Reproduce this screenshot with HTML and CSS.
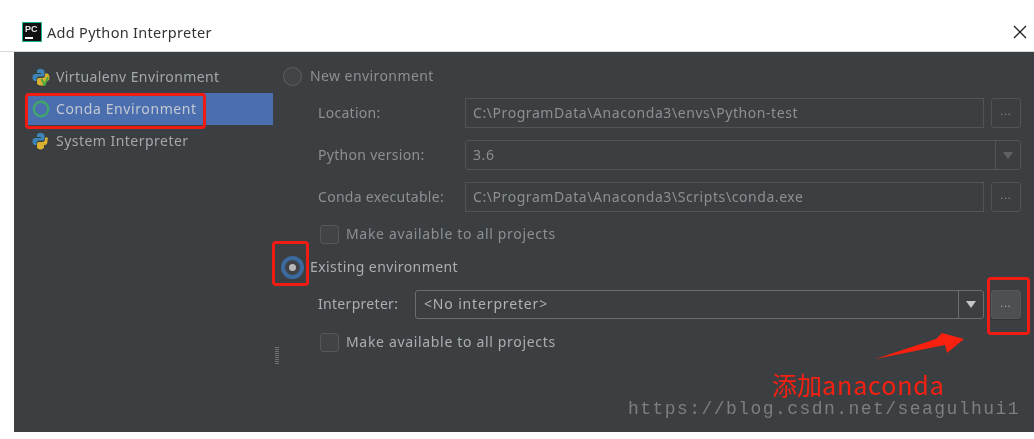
FILE: index.html
```html
<!DOCTYPE html>
<html lang="en">
<head>
<meta charset="utf-8">
<title>Add Python Interpreter</title>
<link rel="stylesheet" href="styles.css">
</head>
<body>
<div class="window">
  <header class="titlebar">
    <div class="logo"><span class="logo-text">PC</span><span class="logo-bar"></span></div>
    <span class="title">Add Python Interpreter</span>
    <svg class="close" width="16" height="16" viewBox="0 0 16 16"><path d="M2 2 L14 14 M14 2 L2 14" stroke="#222" stroke-width="1.3" fill="none"/></svg>
  </header>
  <main class="main">
    <nav class="sidebar">
      <div class="nav-item">
        <svg class="nav-icon" width="18" height="18" viewBox="0 0 18 18"><path d="M8.500 1C5.500 1 5 2.200 5 3.500V5h4v1H3C1.500 6 .5 7.200.5 9.500S1.500 13 3 13h1.500v-2c0-1.500 1.200-2.500 2.500-2.500h3.500c1.200 0 2-.8 2-2V3.500C12.500 2 11 1 8.500 1z" fill="#3d85b8"/><path d="M13 5.500v2c0 1.500-1.200 2.500-2.500 2.500H7c-1.200 0-2 .8-2 2v3c0 1.500 1.500 2.500 3.500 2.500h4.500V13h2c1.500 0 2.500-1.200 2.500-3.500S16.500 5.500 15 5.500z" fill="#d9b132"/><path d="M9.500 11 L12.500 17 L16 9" stroke="#4fa83d" stroke-width="2" fill="none"/></svg>
        <span class="nav-virtualenv">Virtualenv Environment</span>
      </div>
      <div class="nav-item nav-item-selected">
        <svg class="nav-icon" width="18" height="18" viewBox="0 0 18 18"><circle cx="9" cy="9" r="7.200" stroke="#3fa66b" stroke-width="2.400" fill="none"/></svg>
        <span>Conda Environment</span>
      </div>
      <div class="nav-item">
        <svg class="nav-icon" width="18" height="18" viewBox="0 0 18 18"><path d="M8.500 1C5.500 1 5 2.200 5 3.500V5h4v1H3C1.500 6 .5 7.200.5 9.500S1.500 13 3 13h1.500v-2c0-1.500 1.200-2.500 2.500-2.500h3.500c1.200 0 2-.8 2-2V3.500C12.500 2 11 1 8.500 1z" fill="#3d85b8"/><path d="M13 5.500v2c0 1.500-1.200 2.500-2.500 2.500H7c-1.200 0-2 .8-2 2v3c0 1.500 1.500 2.500 3.500 2.500s3.500-1 3.500-2.500V13h1c1.500 0 2.500-1.200 2.500-3.500S16.500 5.500 15 5.500z" fill="#d9b132"/></svg>
        <span class="nav-system">System Interpreter</span>
      </div>
    </nav>
    <div class="grip"></div>
    <section class="form">
      <div class="radio-row dim">
        <span class="radio"></span><span class="radio-text">New environment</span>
      </div>
      <div class="row dim">
        <label class="label">Location:</label>
        <div class="field"><span class="value">C:\ProgramData\Anaconda3\envs\Python-test</span></div>
        <div class="dots">...</div>
      </div>
      <div class="row dim">
        <label class="label">Python version:</label>
        <div class="field combo"><span class="combo-value value">3.6</span><span class="combo-arrow"><span class="triangle"></span></span></div>
      </div>
      <div class="row dim">
        <label class="label">Conda executable:</label>
        <div class="field"><span class="value">C:\ProgramData\Anaconda3\Scripts\conda.exe</span></div>
        <div class="dots">...</div>
      </div>
      <div class="check-row dim">
        <span class="check"></span><span class="check-text">Make available to all projects</span>
      </div>
      <div class="radio-row radio-row-on">
        <span class="radio radio-on"><span class="radio-dot"></span></span><span class="radio-text">Existing environment</span>
      </div>
      <div class="row row-on">
        <label class="label label-short">Interpreter:</label>
        <div class="field combo field-on"><span class="combo-value value-wide">&lt;No interpreter&gt;</span><span class="combo-arrow"><span class="triangle"></span></span></div>
        <div class="dots dots-on">...</div>
      </div>
      <div class="check-row check-row-on">
        <span class="check"></span><span class="check-text">Make available to all projects</span>
      </div>
    </section>
  </main>
  <div class="foot"></div>

  <div class="mark mark-conda"></div>
  <div class="mark mark-radio"></div>
  <div class="mark mark-dots"></div>
  <svg class="arrow" width="100" height="40" viewBox="0 0 100 40"><polygon points="5,29 66,9 72,3 94,9 77,23 75,15" fill="#f8200f"/></svg>
  <div class="annotation">添加<span class="annotation-latin">anaconda</span></div>
  <div class="watermark">https://blog.csdn.net/seagulhui1</div>
</div>
</body>
</html>
```
FILE: styles.css
```css
* { box-sizing: border-box; }
html, body { margin: 0; padding: 0; background: #fff; }
.window {
  position: relative;
  width: 1034px;
  height: 439px;
  overflow: hidden;
  font-family: "Noto Sans", "Liberation Sans", sans-serif;
  font-size: 14px;
  background: #fff;
  filter: blur(0.35px);
}
.titlebar {
  height: 52px;
  display: flex;
  align-items: center;
  padding: 12px 6px 0 22px;
  border-bottom: 1px solid #d8d8d8;
}
.logo {
  position: relative;
  width: 20px;
  height: 20px;
  background: #111;
  border: 1px solid #19b592;
  flex: none;
}
.logo-text {
  display: block;
  font: bold 9px/10px "Liberation Sans", sans-serif;
  color: #e8e8e8;
  padding-left: 2px;
  padding-top: 1px;
}
.logo-bar {
  display: block;
  width: 8px;
  height: 2px;
  background: #fff;
  margin: 3px 0 0 2px;
}
.title {
  margin-left: 5px;
  font-size: 14.500px;
  color: #333;
  letter-spacing: 0.3px;
  flex: 1;
}
.main {
  height: 380px;
  margin-left: 14px;
  background: #3c3f41;
  display: flex;
  color: #a4a8ab;
}
.sidebar {
  width: 259px;
  padding: 9px 0 0 13px;
  flex: none;
}
.nav-item {
  height: 32px;
  display: flex;
  align-items: center;
  gap: 6px;
  padding-left: 5px;
  padding-bottom: 1px;
  letter-spacing: 0.6px;
}
.nav-virtualenv { letter-spacing: 0.4px; }
.nav-system { letter-spacing: 0.47px; }
.nav-item-selected { background: #4b6eaf; color: #c3c9d2; }
.nav-icon { flex: none; }
.grip {
  width: 0;
  position: relative;
}
.grip::before {
  content: "";
  position: absolute;
  left: 2px;
  top: 295px;
  width: 4px;
  height: 18px;
  background: repeating-linear-gradient(#6f7274 0 1px, #3c3f41 1px 2px);
}
.form {
  flex: 1;
  padding-top: 14px;
  letter-spacing: 0.3px;
}
.radio-row {
  height: 20px;
  display: flex;
  align-items: center;
  padding-left: 10px;
  gap: 8px;
}
.radio-text { letter-spacing: 0.42px; padding-bottom: 1px; }
.radio-row-on { margin-top: 13px; color: #abafb2; }
.dim { color: #8c9093; }
.radio {
  width: 19px;
  height: 19px;
  border: 1.500px solid #5d6062;
  border-radius: 50%;
  background: #424547;
  flex: none;
}
.radio-on {
  border: 4px solid #3b6a9e;
  background: #3f4244;
  display: flex;
  align-items: center;
  justify-content: center;
  width: 23px;
  height: 23px;
  margin: 0 -2px;
}
.radio-dot {
  width: 7px;
  height: 7px;
  border-radius: 50%;
  background: #b5b8ba;
}
.row {
  height: 30px;
  margin-top: 12px;
  padding-left: 45px;
  display: flex;
  align-items: center;
}
.row-on { margin-top: 13px; color: #abafb2; height: 29px; }
.label { width: 147px; flex: none; padding-bottom: 2px; }
.label-short { width: 97px; }
.field {
  width: 519px;
  height: 100%;
  border: 1px solid #515456;
  padding-left: 7px;
  padding-bottom: 2px;
  display: flex;
  align-items: center;
  flex: none;
  background: #3c3f41;
}
.value { letter-spacing: 0.57px; }
.value-wide { letter-spacing: 0.85px; padding-left: 1px; }
.field-on { width: 569px; border-color: #6b6e70; border-radius: 3px; color: #b0b3b5; }
.combo { padding-bottom: 0; }
.combo .combo-value { padding-bottom: 2px; }
.row .combo:not(.field-on) { width: 556px; border-radius: 3px; }
.combo-value { flex: 1; }
.combo-arrow {
  width: 25px;
  height: 100%;
  border-left: 1px solid #515456;
  display: flex;
  align-items: center;
  justify-content: center;
  flex: none;
}
.field-on .combo-arrow { border-left-color: #6b6e70; }
.triangle {
  width: 0;
  height: 0;
  border-left: 5px solid transparent;
  border-right: 5px solid transparent;
  border-top: 7px solid #5e6163;
}
.field-on .triangle { border-top-color: #c4c6c8; }
.dots {
  width: 30px;
  height: 100%;
  margin-left: 7px;
  border: 1px solid #515456;
  border-radius: 3px;
  display: flex;
  justify-content: center;
  align-items: center;
  font-size: 10px;
  line-height: 10px;
  letter-spacing: 1px;
  padding-bottom: 4px;
  flex: none;
}
.dots-on {
  background: #4c5052;
  border-color: #55585a;
  color: #b0b3b5;
  box-shadow: 0 1px 1px #333;
}
.check-row {
  height: 20px;
  margin-top: 12px;
  padding-left: 47px;
  display: flex;
  align-items: center;
  gap: 8px;
}
.check-text { letter-spacing: 0.67px; padding-bottom: 1px; margin-left: -1px; }
.check-row-on { margin-top: 13px; color: #abafb2; }
.check {
  width: 19px;
  height: 19px;
  border: 1.500px solid #55585a;
  border-radius: 3px;
  background: #414446;
  flex: none;
}
.foot { height: 7px; background: #fff; }
.mark {
  position: absolute;
  border: 3.500px solid #f01c14;
  border-radius: 4px;
}
.mark-conda { left: 25px; top: 93px; width: 181px; height: 36px; }
.mark-radio { left: 272px; top: 241px; width: 37px; height: 45px; }
.mark-dots { left: 987px; top: 277px; width: 43px; height: 58px; }
.arrow { position: absolute; left: 870px; top: 330px; }
.annotation {
  position: absolute;
  left: 772px;
  top: 372px;
  font-family: "Noto Sans CJK SC", "Liberation Sans", sans-serif;
  font-size: 25px;
  line-height: 24px;
  color: #f42012;
}
.annotation-latin { letter-spacing: 0.9px; }
.watermark {
  position: absolute;
  left: 628px;
  top: 399px;
  font-family: "Liberation Mono", monospace;
  font-size: 18px;
  line-height: 20px;
  letter-spacing: 1.450px;
  color: #7c7e80;
  white-space: nowrap;
}
```
